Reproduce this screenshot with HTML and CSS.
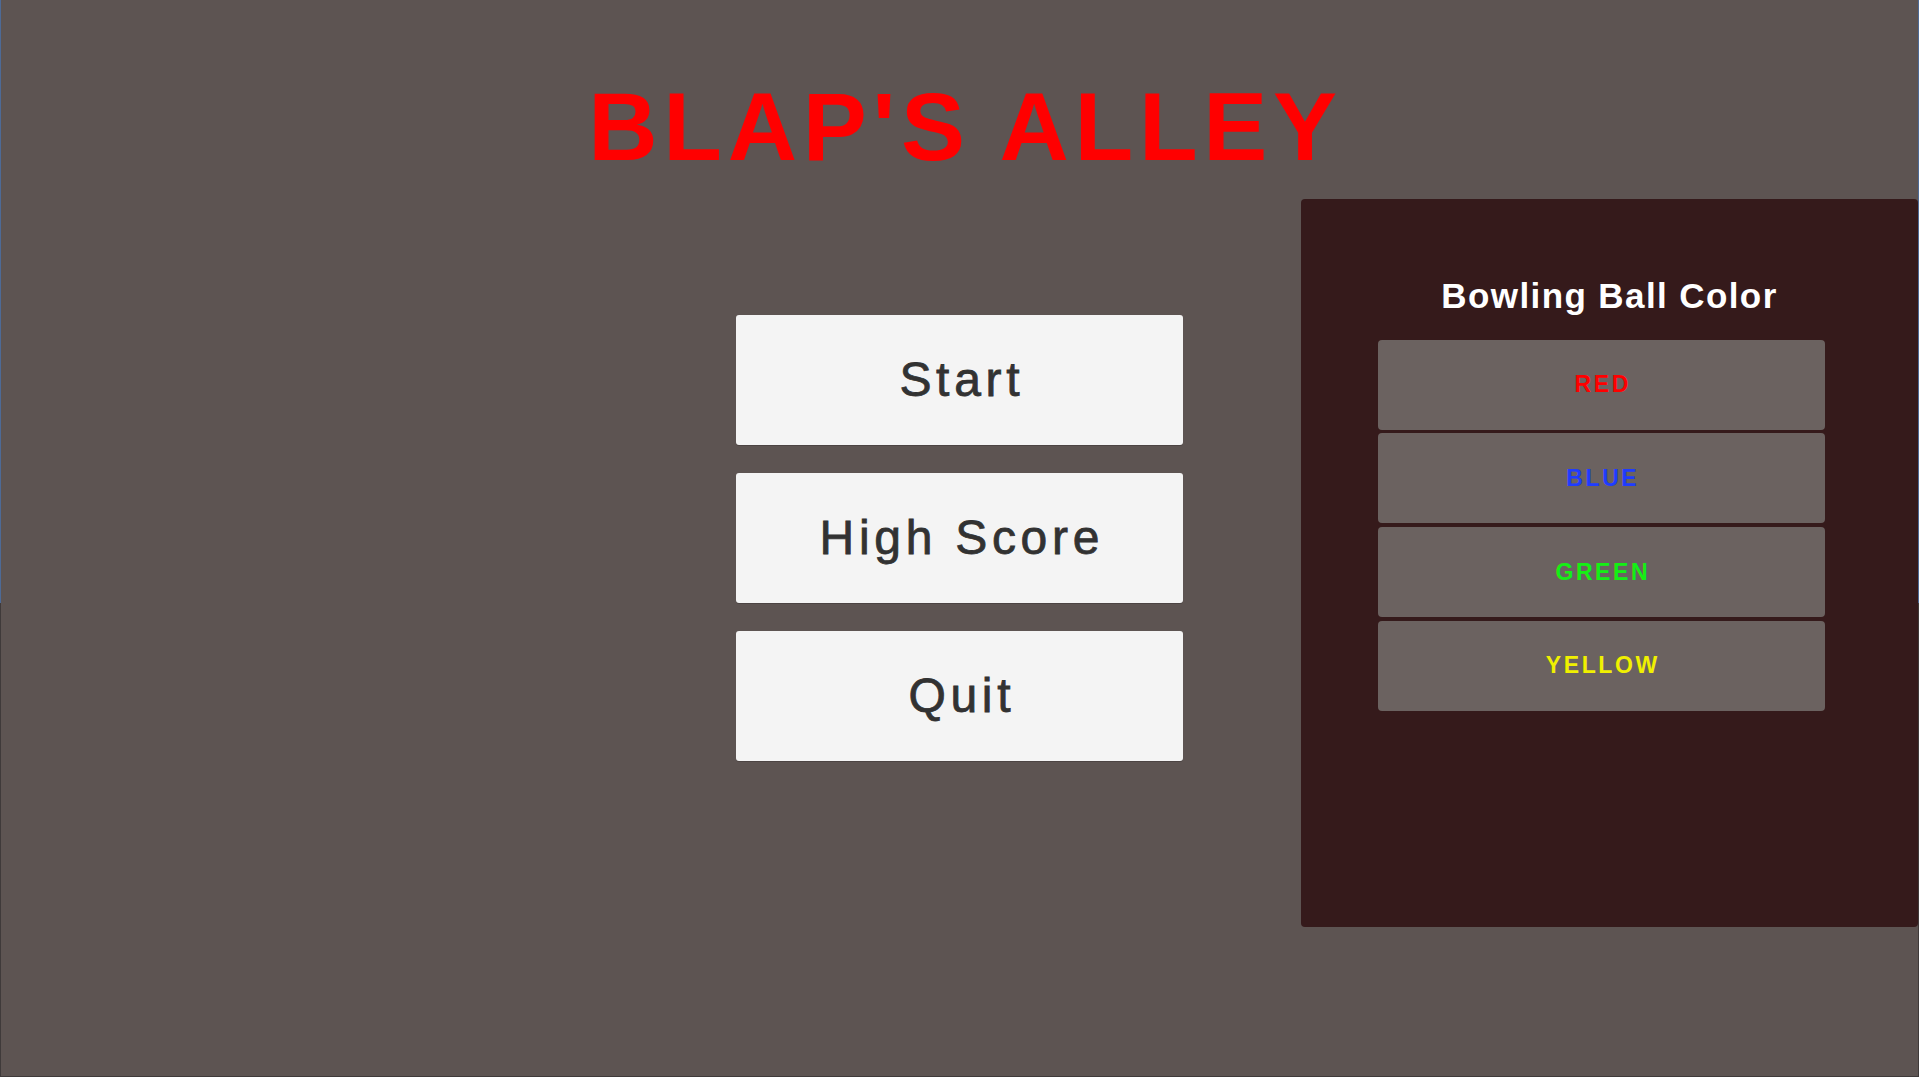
FILE: index.html
```html
<!DOCTYPE html>
<html lang="en">
<head>
<meta charset="utf-8">
<title>Blap's Alley</title>
<link rel="stylesheet" href="styles.css">
</head>
<body>
<main class="screen">
  <h1 class="title">BLAP'S ALLEY</h1>
  <div class="spacer"></div>
  <nav class="menu">
    <button class="menu-btn">Start</button>
    <button class="menu-btn">High Score</button>
    <button class="menu-btn">Quit</button>
  </nav>
  <section class="panel">
    <h2 class="panel-title">Bowling Ball Color</h2>
    <div class="color-list">
      <button class="color-btn red">RED</button>
      <button class="color-btn blue">BLUE</button>
      <button class="color-btn green">GREEN</button>
      <button class="color-btn yellow">YELLOW</button>
    </div>
  </section>
</main>
</body>
</html>
```
FILE: styles.css
```css
html, body {
  margin: 0;
  padding: 0;
  background: #5d5452;
}

.screen {
  box-sizing: border-box;
  width: 1919px;
  height: 1077px;
  overflow: hidden;
  background: #5d5452;
  border-left: 1px solid;
  border-right: 1px solid #3f3a3a;
  border-bottom: 1px solid #3b3636;
  border-image: linear-gradient(to bottom, #4d6a96 0%, #4d6a96 56%, #3f3a3a 56%, #3f3a3a 100%) 1;
  display: grid;
  grid-template-columns: 1fr 447px 1fr;
  grid-template-rows: auto 1fr;
  font-family: "Liberation Sans", Arial, sans-serif;
}

.title {
  grid-column: 1 / -1;
  margin: 0;
  padding: 79px 0 24px;
  font-size: 96px;
  line-height: 96px;
  font-weight: 700;
  letter-spacing: 5.7px;
  text-align: center;
  color: #ff0000;
  text-indent: 12px;
}

.menu {
  display: flex;
  flex-direction: column;
  gap: 27.5px;
  padding-top: 115.5px;
}

.menu-btn {
  height: 130.5px;
  margin: 0;
  padding: 0;
  border: none;
  border-radius: 3px;
  background: #f4f4f4;
  box-shadow: 0 1px 0 rgba(0, 0, 0, 0.18);
  color: #323232;
  font-family: "Liberation Sans", Arial, sans-serif;
  font-size: 48px;
  font-weight: 400;
  letter-spacing: 4.7px;
  text-indent: 4.7px;
  -webkit-text-stroke: 0.8px #323232;
  display: flex;
  align-items: center;
  justify-content: center;
}

.panel {
  margin-left: 118px;
  height: 727.5px;
  background: #351a1b;
  border-radius: 4px;
  box-sizing: border-box;
  padding-top: 77px;
}

.panel-title {
  margin: 0;
  font-size: 35px;
  line-height: 40px;
  font-weight: 700;
  letter-spacing: 1.4px;
  text-align: center;
  color: #ffffff;
}

.color-list {
  margin: 23.5px 0 0 77px;
  width: 447px;
  display: flex;
  flex-direction: column;
  gap: 3.4px;
}

.color-btn {
  height: 90.3px;
  margin: 0;
  padding: 0;
  border: none;
  border-radius: 4px;
  background: #6b6260;
  font-family: "Liberation Sans", Arial, sans-serif;
  font-size: 23px;
  font-weight: 700;
  letter-spacing: 2.6px;
  text-indent: 2.6px;
  display: flex;
  align-items: center;
  justify-content: center;
}

.red { color: #ff0000; }
.blue { color: #1f3cff; }
.green { color: #14f014; }
.yellow { color: #f0f000; }
```
